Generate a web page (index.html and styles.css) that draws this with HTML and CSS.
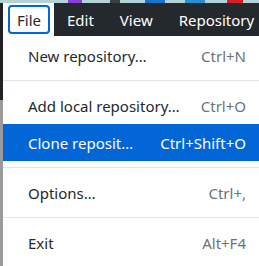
FILE: index.html
```html
<!DOCTYPE html>
<html>
<head>
<meta charset="utf-8">
<link rel="stylesheet" href="styles.css">
</head>
<body>
<div class="strip"></div>
<div class="main">
  <div class="edge"></div>
  <div class="app">
    <div class="menubar">
      <div class="top-item active"><span class="focus">File</span></div>
      <div class="top-item">Edit</div>
      <div class="top-item">View</div>
      <div class="top-item">Repository</div>
    </div>
    <div class="menu">
      <div class="item"><span class="label">New repository…</span><span class="key">Ctrl+N</span></div>
      <div class="sep"></div>
      <div class="item"><span class="label">Add local repository…</span><span class="key">Ctrl+O</span></div>
      <div class="item selected"><span class="label">Clone reposit…</span><span class="key">Ctrl+Shift+O</span></div>
      <div class="sep"></div>
      <div class="item"><span class="label">Options…</span><span class="key">Ctrl+,</span></div>
      <div class="sep"></div>
      <div class="item"><span class="label">Exit</span><span class="key">Alt+F4</span></div>
    </div>
  </div>
</div>
</body>
</html>
```
FILE: styles.css
```css
html, body {
  margin: 0;
  padding: 0;
  width: 259px;
  height: 266px;
  overflow: hidden;
  font-family: "Noto Sans", "Open Sans", sans-serif;
}
.strip {
  height: 3px;
  background:
    linear-gradient(to right,
      #b3d2d8 0, #b3d2d8 68px,
      #8a3fd6 68px, #8a3fd6 82px,
      #b3d2d8 82px, #b3d2d8 110px,
      #3a3f44 110px, #3a3f44 120px,
      #b3d2d8 120px, #b3d2d8 145px,
      #1a73c8 145px, #1a73c8 165px,
      #b3d2d8 165px, #b3d2d8 185px,
      #2a8fcf 185px, #2a8fcf 205px,
      #b3d2d8 205px, #b3d2d8 227px,
      #d0202a 227px, #d0202a 243px,
      #b3d2d8 243px);
}
.main {
  display: flex;
  height: 263px;
}
.edge {
  width: 3px;
  flex: none;
  background: linear-gradient(to bottom, #1f2326 0, #1f2326 97px, #9a9a9a 97px);
}
.app {
  flex: 1;
  display: flex;
  flex-direction: column;
  min-width: 0;
}
.menubar {
  display: flex;
  height: 33px;
  background: #24292e;
  color: #ffffff;
  font-size: 15px;
  white-space: nowrap;
}
.top-item {
  display: flex;
  align-items: center;
  padding: 0 13px;
}
.top-item.active {
  background: #ffffff;
  color: #24292e;
  padding: 0 4px 0 5px;
}
.focus {
  display: flex;
  align-items: center;
  height: 29px;
  padding: 0 7px;
  border: 2px solid #0366d6;
  border-radius: 4px;
  box-sizing: border-box;
  margin-top: 0;
}
.menu {
  flex: 1;
  background: #ffffff;
  padding-top: 1px;
  font-size: 15px;
}
.item {
  display: flex;
  justify-content: space-between;
  align-items: center;
  height: 37px;
  padding: 0 13px 0 25px;
  color: #24292e;
  white-space: nowrap;
}
.key {
  color: #6a737d;
}
.item.selected {
  background: #0366d6;
  color: #ffffff;
}
.item.selected .key {
  color: #ffffff;
}
.sep {
  height: 1px;
  background: #e1e4e8;
  margin: 6px 0 6px;
}
```
